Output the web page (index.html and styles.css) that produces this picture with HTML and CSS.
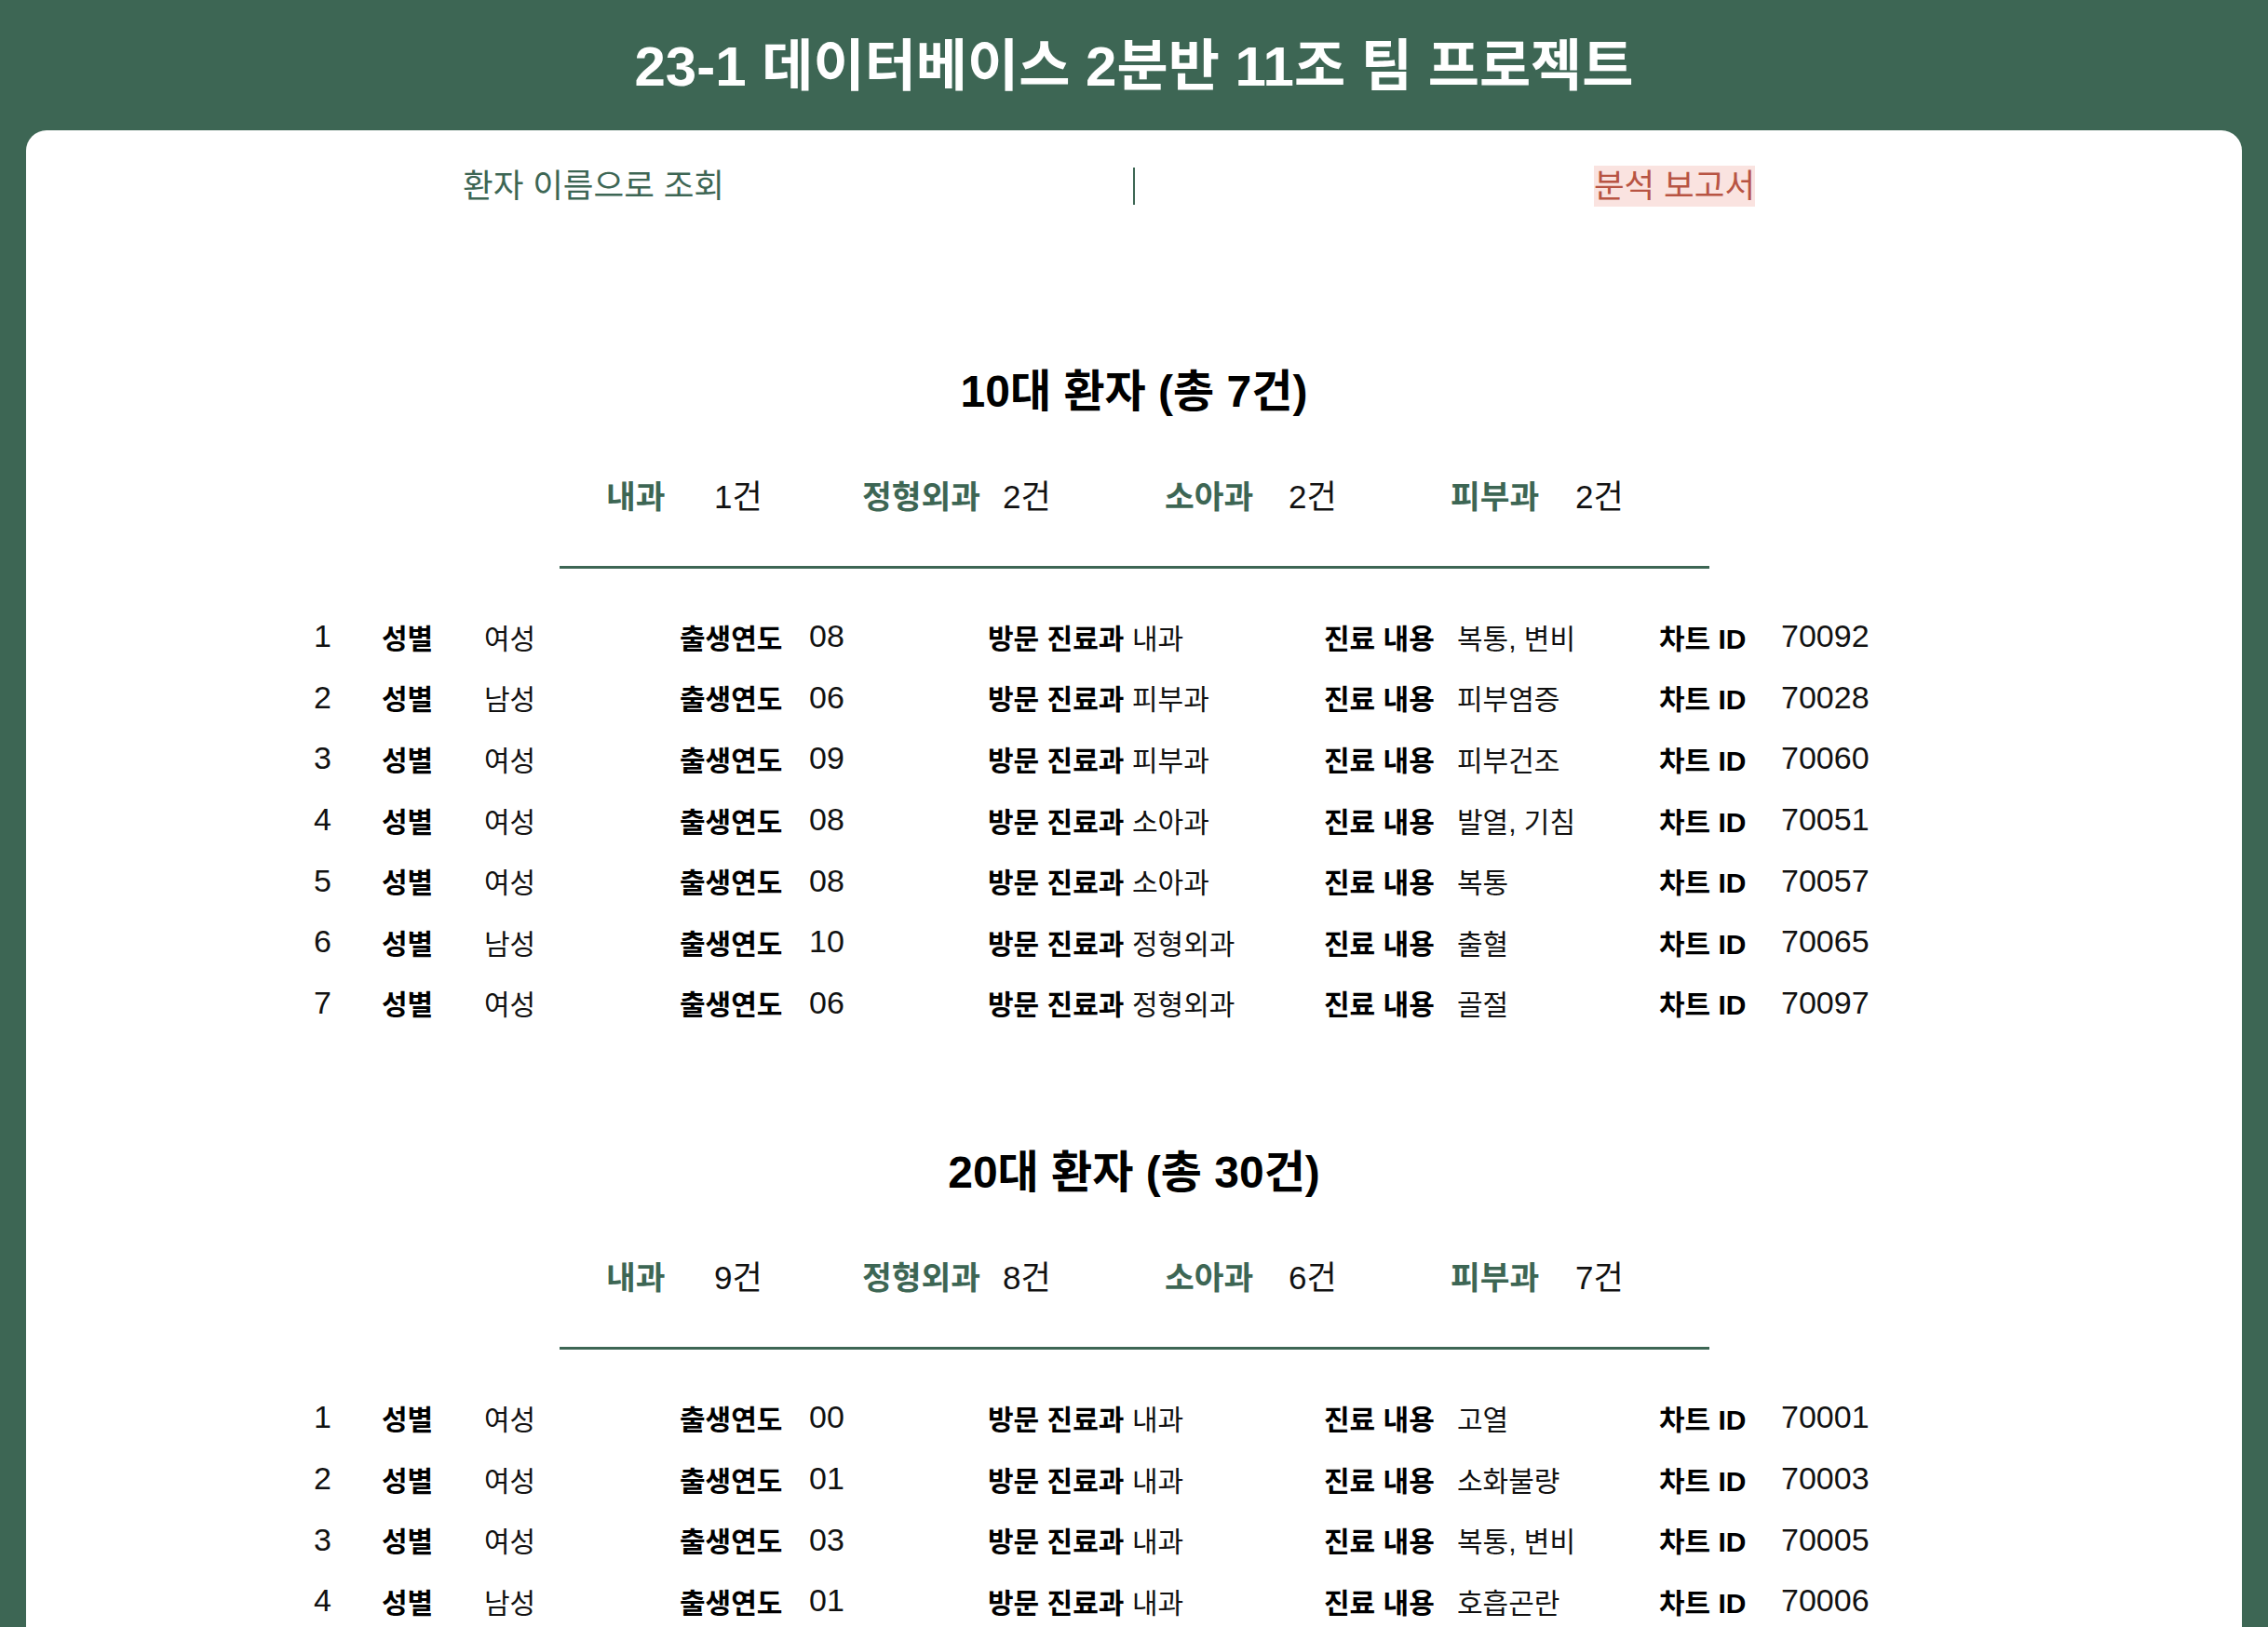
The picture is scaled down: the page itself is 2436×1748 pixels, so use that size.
FILE: index.html
```html
<!DOCTYPE html>
<html lang="ko">
<head>
<meta charset="utf-8">
<title>23-1 데이터베이스 2분반 11조 팀 프로젝트</title>
<link rel="stylesheet" href="styles.css">
</head>
<body>
<header class="top">
  <h1 class="title">23-1 데이터베이스 2분반 11조 팀 프로젝트</h1>
</header>
<main class="card">
  <nav class="nav">
    <div class="nav-item"><a class="nav-link">환자 이름으로 조회</a></div>
    <div class="nav-sep"></div>
    <div class="nav-item"><a class="nav-link active">분석 보고서</a></div>
  </nav>

  <section class="group first">
    <h2 class="group-title">10대 환자 (총 7건)</h2>
    <div class="depts">
      <span class="dept">내과</span><span class="cnt">1건</span>
      <span class="dept">정형외과</span><span class="cnt">2건</span>
      <span class="dept">소아과</span><span class="cnt">2건</span>
      <span class="dept">피부과</span><span class="cnt">2건</span>
    </div>
    <hr class="divider">
    <div class="rows">
      <div class="row"><span class="num">1</span><b>성별</b><span>여성</span><b>출생연도</b><span class="num">08</span><b>방문 진료과</b><span>내과</span><b>진료 내용</b><span>복통, 변비</span><b>차트 ID</b><span class="num">70092</span></div>
      <div class="row"><span class="num">2</span><b>성별</b><span>남성</span><b>출생연도</b><span class="num">06</span><b>방문 진료과</b><span>피부과</span><b>진료 내용</b><span>피부염증</span><b>차트 ID</b><span class="num">70028</span></div>
      <div class="row"><span class="num">3</span><b>성별</b><span>여성</span><b>출생연도</b><span class="num">09</span><b>방문 진료과</b><span>피부과</span><b>진료 내용</b><span>피부건조</span><b>차트 ID</b><span class="num">70060</span></div>
      <div class="row"><span class="num">4</span><b>성별</b><span>여성</span><b>출생연도</b><span class="num">08</span><b>방문 진료과</b><span>소아과</span><b>진료 내용</b><span>발열, 기침</span><b>차트 ID</b><span class="num">70051</span></div>
      <div class="row"><span class="num">5</span><b>성별</b><span>여성</span><b>출생연도</b><span class="num">08</span><b>방문 진료과</b><span>소아과</span><b>진료 내용</b><span>복통</span><b>차트 ID</b><span class="num">70057</span></div>
      <div class="row"><span class="num">6</span><b>성별</b><span>남성</span><b>출생연도</b><span class="num">10</span><b>방문 진료과</b><span>정형외과</span><b>진료 내용</b><span>출혈</span><b>차트 ID</b><span class="num">70065</span></div>
      <div class="row"><span class="num">7</span><b>성별</b><span>여성</span><b>출생연도</b><span class="num">06</span><b>방문 진료과</b><span>정형외과</span><b>진료 내용</b><span>골절</span><b>차트 ID</b><span class="num">70097</span></div>
    </div>
  </section>

  <section class="group">
    <h2 class="group-title">20대 환자 (총 30건)</h2>
    <div class="depts">
      <span class="dept">내과</span><span class="cnt">9건</span>
      <span class="dept">정형외과</span><span class="cnt">8건</span>
      <span class="dept">소아과</span><span class="cnt">6건</span>
      <span class="dept">피부과</span><span class="cnt">7건</span>
    </div>
    <hr class="divider">
    <div class="rows">
      <div class="row"><span class="num">1</span><b>성별</b><span>여성</span><b>출생연도</b><span class="num">00</span><b>방문 진료과</b><span>내과</span><b>진료 내용</b><span>고열</span><b>차트 ID</b><span class="num">70001</span></div>
      <div class="row"><span class="num">2</span><b>성별</b><span>여성</span><b>출생연도</b><span class="num">01</span><b>방문 진료과</b><span>내과</span><b>진료 내용</b><span>소화불량</span><b>차트 ID</b><span class="num">70003</span></div>
      <div class="row"><span class="num">3</span><b>성별</b><span>여성</span><b>출생연도</b><span class="num">03</span><b>방문 진료과</b><span>내과</span><b>진료 내용</b><span>복통, 변비</span><b>차트 ID</b><span class="num">70005</span></div>
      <div class="row"><span class="num">4</span><b>성별</b><span>남성</span><b>출생연도</b><span class="num">01</span><b>방문 진료과</b><span>내과</span><b>진료 내용</b><span>호흡곤란</span><b>차트 ID</b><span class="num">70006</span></div>
    </div>
  </section>
</main>
</body>
</html>
```

FILE: styles.css
```css
html, body {
  margin: 0;
  padding: 0;
}
body {
  background: #3d6654;
  font-family: "Liberation Sans", "Noto Sans CJK KR", sans-serif;
  color: #111;
}
.top {
  height: 140px;
  padding-top: 4px;
  box-sizing: border-box;
  display: flex;
  align-items: center;
  justify-content: center;
}
.title {
  margin: 0;
  color: #fff;
  font-size: 60px;
  font-weight: 700;
  line-height: 70px;
}
.card {
  margin: 0 28px;
  padding: 37px 30px 120px;
  background: #fff;
  border-radius: 22px 22px 0 0;
  min-height: 1600px;
}
.nav {
  display: flex;
  align-items: center;
  height: 46px;
}
.nav-item {
  flex: 1;
  text-align: center;
}
.nav-link {
  font-size: 35.5px;
  line-height: 44px;
  color: #3d6654;
  display: inline-block;
}
.nav-link.active {
  color: #b85443;
  background: #fae3e0;
}
.nav-sep {
  width: 2px;
  height: 40px;
  background: #3d6654;
}
.group {
  padding-top: 120px;
}
.group.first {
  padding-top: 168px;
}
.group-title {
  margin: 0;
  text-align: center;
  font-size: 48px;
  font-weight: 700;
  line-height: 60px;
  color: #000;
}
.depts {
  margin-top: 54px;
  display: grid;
  grid-template-columns: 116px 159px 151px 174px 133px 174px 134px 93px;
  justify-content: center;
  align-items: center;
  height: 50px;
  font-size: 34.5px;
}
.dept {
  color: #3d6654;
  font-weight: 700;
}
.cnt {
  color: #111;
  font-size: 35px;
}
.divider {
  margin: 53px auto 0;
  width: 1235px;
  height: 3px;
  border: 0;
  background: #3d6654;
}
.rows {
  margin-top: 40px;
}
.row {
  display: grid;
  grid-template-columns: 73px 110px 210px 139px 192px 155px 206px 143px 217px 131px 186px;
  justify-content: center;
  align-items: center;
  height: 65.6px;
  font-size: 30px;
  white-space: nowrap;
}
.row b {
  font-weight: 700;
  color: #000;
}
.row .num {
  font-size: 34px;
}
```
